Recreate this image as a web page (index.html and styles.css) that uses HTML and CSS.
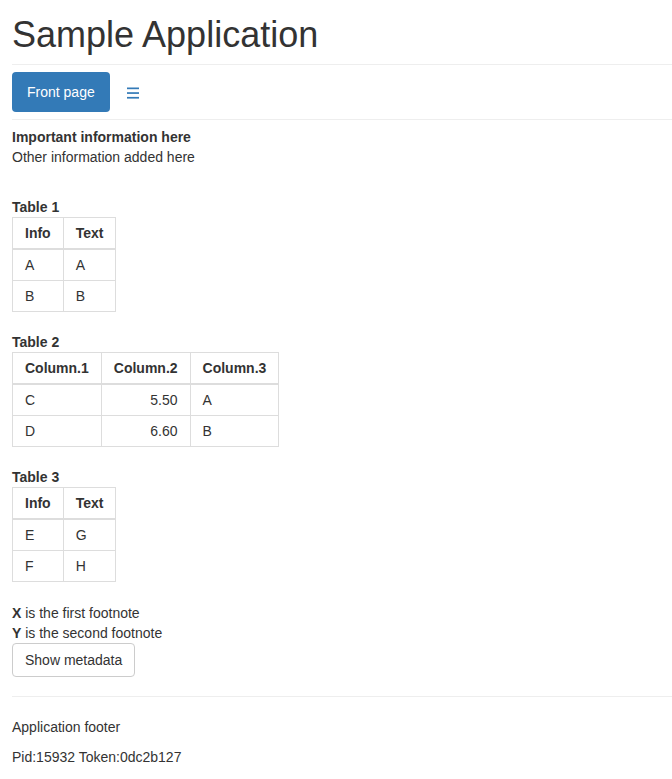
FILE: index.html
```html
<!DOCTYPE html>
<html>
<head>
<meta charset="utf-8">
<link rel="stylesheet" href="styles.css">
</head>
<body>
<div class="page">
  <h1 class="title">Sample Application</h1>
  <hr class="rule">
  <nav class="nav">
    <a class="pill">Front page</a>
    <span class="menu" aria-label="menu">
      <svg width="12" height="12" viewBox="0 0 12 12"><rect x="0" y="0.5" width="12" height="1.7" fill="#337ab7"/><rect x="0" y="5.2" width="12" height="1.7" fill="#337ab7"/><rect x="0" y="9.9" width="12" height="1.7" fill="#337ab7"/></svg>
    </span>
  </nav>
  <hr class="rule rule-nav">
  <div class="info">
    <div class="strong">Important information here</div>
    <div>Other information added here</div>
  </div>

  <div class="block first">
    <div class="caption">Table 1</div>
    <table class="tbl">
      <thead><tr><th>Info</th><th>Text</th></tr></thead>
      <tbody>
        <tr><td>A</td><td>A</td></tr>
        <tr><td>B</td><td>B</td></tr>
      </tbody>
    </table>
  </div>

  <div class="block">
    <div class="caption">Table 2</div>
    <table class="tbl">
      <thead><tr><th>Column.1</th><th>Column.2</th><th>Column.3</th></tr></thead>
      <tbody>
        <tr><td>C</td><td class="num">5.50</td><td>A</td></tr>
        <tr><td>D</td><td class="num">6.60</td><td>B</td></tr>
      </tbody>
    </table>
  </div>

  <div class="block">
    <div class="caption">Table 3</div>
    <table class="tbl">
      <thead><tr><th>Info</th><th>Text</th></tr></thead>
      <tbody>
        <tr><td>E</td><td>G</td></tr>
        <tr><td>F</td><td>H</td></tr>
      </tbody>
    </table>
  </div>

  <div class="notes">
    <div><b>X</b> is the first footnote</div>
    <div><b>Y</b> is the second footnote</div>
  </div>
  <button class="btn">Show metadata</button>
  <hr class="rule rule-foot">
  <footer class="footer">
    <p>Application footer</p>
    <p>Pid:15932 Token:0dc2b127</p>
  </footer>
</div>
</body>
</html>
```
FILE: styles.css
```css
html, body {
  margin: 0;
  padding: 0;
  background: #fff;
}
body {
  font-family: "Liberation Sans", Arial, Helvetica, sans-serif;
  font-size: 14px;
  line-height: 20px;
  color: #333;
}
.page {
  padding-left: 12px;
}
.title {
  font-size: 36px;
  font-weight: 500;
  line-height: 39.6px;
  margin: 15px 0 9px 0;
  color: #333;
}
.rule {
  border: 0;
  border-top: 1px solid #eee;
  margin: 0;
  height: 0;
}
.nav {
  display: flex;
  align-items: center;
  margin: 7px 0 7px 0;
}
.pill {
  display: block;
  background: #337ab7;
  color: #fff;
  padding: 10px 15px;
  border-radius: 4px;
  line-height: 20px;
}
.menu {
  display: flex;
  margin-left: 17px;
  margin-top: 2px;
}
.info {
  margin-top: 7px;
}
.strong {
  font-weight: bold;
}
.block {
  margin-top: 20px;
}
.block.first {
  margin-top: 30px;
}
.caption {
  font-weight: bold;
  line-height: 20px;
}
.tbl {
  border-collapse: collapse;
  border: 1px solid #ddd;
}
.tbl th, .tbl td {
  border: 1px solid #ddd;
  padding: 5px 12px;
  line-height: 20px;
  text-align: left;
  vertical-align: top;
}
.tbl th {
  font-weight: bold;
  border-bottom-width: 2px;
}
.tbl td.num {
  text-align: right;
}
.notes {
  margin-top: 21px;
}
.btn {
  display: inline-block;
  margin-top: 0;
  font-family: inherit;
  font-size: 14px;
  line-height: 20px;
  color: #333;
  background: #fff;
  border: 1px solid #ccc;
  border-radius: 4px;
  padding: 6px 12px;
}
.rule-foot {
  margin-top: 19px;
}
.footer {
  padding-top: 10px;
}
.footer p {
  margin: 10px 0;
}
```
